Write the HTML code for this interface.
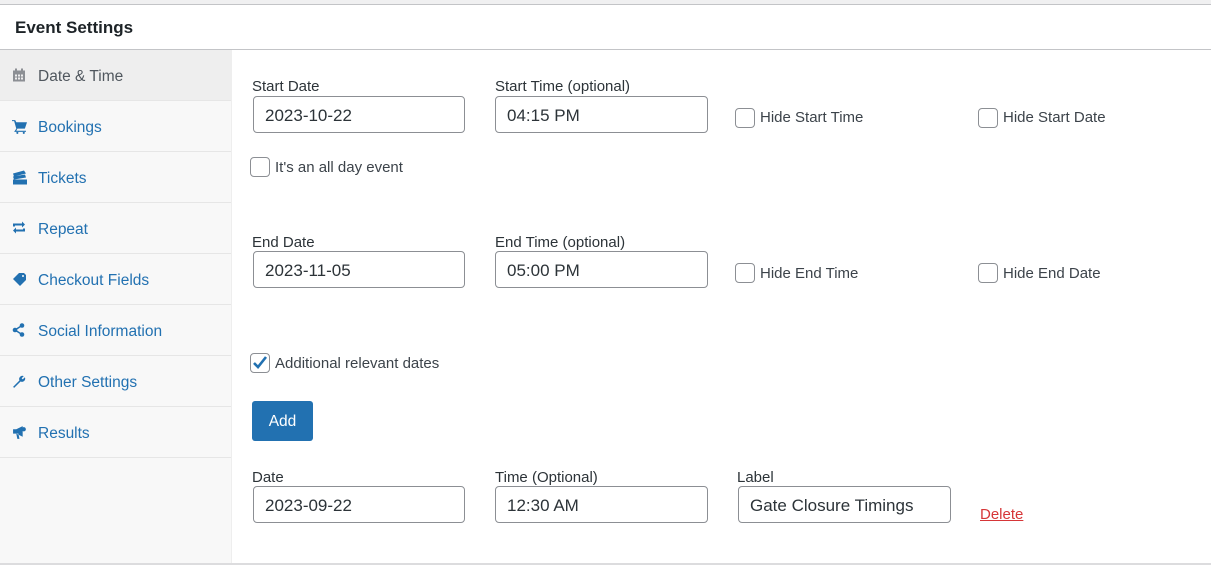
<!DOCTYPE html>
<html><head><style>
*{box-sizing:border-box;margin:0;padding:0}
body{width:1211px;height:566px;position:relative;background:#fff;font-family:"Liberation Sans",sans-serif;color:#1d2327;overflow:hidden}
.a{position:absolute}
.lbl{position:absolute;font-size:15px;color:#2c3338;line-height:18px}
.inp{position:absolute;height:37px;border:1px solid #8c8f94;border-radius:4px;background:#fff;font-size:17px;line-height:38px;padding-left:11px;color:#2c3338}
.cb{position:absolute;width:20px;height:20px;border:1px solid #8c8f94;border-radius:4px;background:#fff}
.ct{position:absolute;font-size:15px;color:#3c434a;line-height:18px}
.side{position:absolute;left:0;top:50px;width:232px;height:513px;background:#f8f8f8;border-right:1px solid #eee}
.it{height:51px;border-bottom:1px solid #e6e6e6;position:relative;font-size:15.5px;color:#2271b1;line-height:53px;padding-left:38px}
.it svg{position:absolute;left:12px;top:18px}
.it.on{background:#eee;color:#50575e}
</style></head><body>
<div class="a" style="left:0;top:0;width:1211px;height:4px;background:#f0f0f1"></div>
<div class="a" style="left:0;top:4px;width:1211px;height:1px;background:#c3c4c7"></div>
<div class="a" style="left:15px;top:18px;font-size:17px;font-weight:bold;color:#1d2327">Event Settings</div>
<div class="a" style="left:0;top:49px;width:1211px;height:1px;background:#c3c4c7"></div>
<div class="a" style="left:0;top:563px;width:1211px;height:2px;background:#dcdcde"></div>
<div class="side">
<div class="it on"><svg width="14" height="15" viewBox="0 0 14 14"><rect x="1" y="2" width="12" height="11" fill="#8c8f94"/><g fill="#eee"><rect x="3" y="6" width="2" height="2"/><rect x="6" y="6" width="2" height="2"/><rect x="9" y="6" width="2" height="2"/><rect x="3" y="9" width="2" height="2"/><rect x="6" y="9" width="2" height="2"/><rect x="9" y="9" width="2" height="2"/></g><rect x="3" y="0" width="2" height="3" fill="#8c8f94"/><rect x="9" y="0" width="2" height="3" fill="#8c8f94"/></svg>Date &amp; Time</div>
<div class="it"><svg width="15" height="15" viewBox="0 0 14 14"><path d="M0 1h3l1 2h10l-2 6H5L4 11h9v1H2l2-3L2 2H0z" fill="#2271b1"/><circle cx="5" cy="13" r="1" fill="#2271b1"/><circle cx="11" cy="13" r="1" fill="#2271b1"/></svg>Bookings</div>
<div class="it"><svg width="16" height="15" viewBox="0 0 16 14"><path d="M1 3l11-3 2 3-12 3zM1 6l12-2 1 3-12 2zM1 9h14v5H1z" fill="#2271b1"/></svg>Tickets</div>
<div class="it"><svg width="14" height="13" viewBox="0 0 14 12"><path d="M1 5V2h9V0l3 3-3 3V4H3v1zM13 7v3H4v2L1 9l3-3v2h7V7z" fill="#2271b1"/></svg>Repeat</div>
<div class="it"><svg width="16" height="16" viewBox="0 0 16 14"><path d="M1 6l6-6h5l2 2v5l-6 6z" fill="#2271b1"/><circle cx="11" cy="3" r="1" fill="#f8f8f8"/></svg>Checkout Fields</div>
<div class="it"><svg width="14" height="14" viewBox="0 0 14 14"><circle cx="3" cy="7" r="2.3" fill="#2271b1"/><circle cx="10" cy="2.5" r="2.3" fill="#2271b1"/><circle cx="10" cy="11.5" r="2.3" fill="#2271b1"/><path d="M3 7l7-4.5M3 7l7 4.5" stroke="#2271b1" stroke-width="1.5"/></svg>Social Information</div>
<div class="it"><svg width="15" height="15" viewBox="0 0 14 14"><path d="M1 12l6-6a3 3 0 014-4l-2 2 1 1 2-2a3 3 0 01-4 4l-6 6z" fill="#2271b1"/></svg>Other Settings</div>
<div class="it"><svg width="16" height="15" viewBox="0 0 15 14"><path d="M1 4h3l6-3v10L4 8H1zM4 8l1 5h2L6 8z" fill="#2271b1"/><circle cx="11" cy="4" r="2" fill="#2271b1"/></svg>Results</div>
</div>

<div class="lbl" style="left:252px;top:78px">Start Date</div>
<div class="inp" style="left:253px;top:96px;width:212px">2023-10-22</div>
<div class="lbl" style="left:495px;top:78px">Start Time (optional)</div>
<div class="inp" style="left:495px;top:96px;width:213px">04:15 PM</div>
<div class="cb" style="left:735px;top:108px"></div><div class="ct" style="left:760px;top:109px">Hide Start Time</div>
<div class="cb" style="left:978px;top:108px"></div><div class="ct" style="left:1003px;top:109px">Hide Start Date</div>
<div class="cb" style="left:250px;top:157px"></div><div class="ct" style="left:275px;top:159px">It's an all day event</div>

<div class="lbl" style="left:252px;top:234px">End Date</div>
<div class="inp" style="left:253px;top:251px;width:212px">2023-11-05</div>
<div class="lbl" style="left:495px;top:234px">End Time (optional)</div>
<div class="inp" style="left:495px;top:251px;width:213px">05:00 PM</div>
<div class="cb" style="left:735px;top:263px"></div><div class="ct" style="left:760px;top:265px">Hide End Time</div>
<div class="cb" style="left:978px;top:263px"></div><div class="ct" style="left:1003px;top:265px">Hide End Date</div>

<div class="cb" style="left:250px;top:353px"><svg width="18" height="18" viewBox="0 0 18 18" style="position:absolute;left:0;top:0"><path d="M3 9l4 4 8-10" stroke="#2271b1" stroke-width="2.6" fill="none"/></svg></div>
<div class="ct" style="left:275px;top:355px">Additional relevant dates</div>
<div class="a" style="left:252px;top:401px;width:61px;height:40px;background:#2271b1;border-radius:3px;color:#fff;font-size:15.5px;line-height:42px;text-align:center">Add</div>

<div class="lbl" style="left:252px;top:469px">Date</div>
<div class="inp" style="left:253px;top:486px;width:212px">2023-09-22</div>
<div class="lbl" style="left:495px;top:469px">Time (Optional)</div>
<div class="inp" style="left:495px;top:486px;width:213px">12:30 AM</div>
<div class="lbl" style="left:737px;top:469px">Label</div>
<div class="inp" style="left:738px;top:486px;width:213px">Gate Closure Timings</div>
<div class="a" style="left:980px;top:506px;font-size:15px;color:#d63638;text-decoration:underline">Delete</div>
</body></html>
